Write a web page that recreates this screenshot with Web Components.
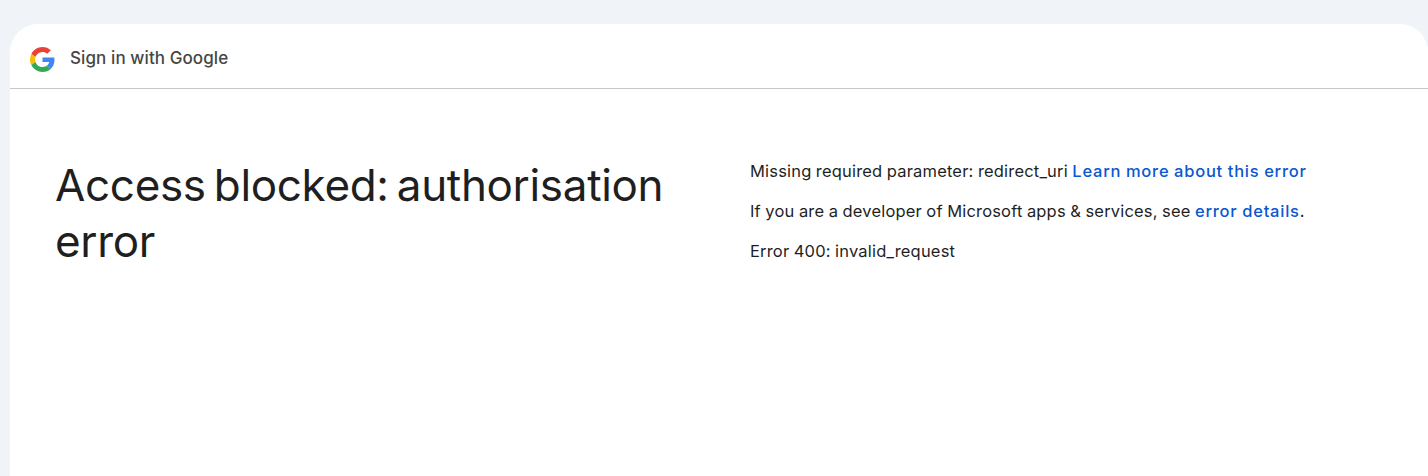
<!DOCTYPE html>
<html lang="en">
<head>
<meta charset="utf-8">
<title>Sign in with Google</title>
<style>
html, body { margin: 0; height: 100%; overflow: hidden; }
body { background: #f0f4f9; font-family: Inter, Roboto, "Liberation Sans", sans-serif; }
</style>
</head>
<body>
<signin-page>
	<signin-header>Sign in with Google</signin-header>
	<error-layout>
		<error-title slot="title">Access blocked: authorisation error</error-title>
		<error-line><span>Missing required parameter: redirect_uri</span> <error-link>Learn more about this error</error-link></error-line>
		<error-line><span>If you are a developer of Microsoft apps &amp; services, see</span> <error-link>error details</error-link>.</error-line>
		<error-line>Error 400: invalid_request</error-line>
	</error-layout>
</signin-page>
<script>
class SigninPage extends HTMLElement {
	constructor() {
		super();
		this.attachShadow({ mode: 'open' }).innerHTML = `
<style>
:host { display: block; height: 476px; box-sizing: border-box; padding: 24px 0 0 10px; }
.card { background: #fff; height: 100%; border-radius: 28px 28px 0 0; }
</style>
<div class="card"><slot></slot></div>`;
	}
}

class SigninHeader extends HTMLElement {
	constructor() {
		super();
		this.attachShadow({ mode: 'open' }).innerHTML = `
<style>
:host {
	display: flex;
	align-items: center;
	gap: 15px;
	box-sizing: border-box;
	height: 65px;
	padding: 4px 0 0 20px;
	border-bottom: 1px solid #c4c7c5;
	font: 500 17px Inter, Roboto, sans-serif;
	letter-spacing: 0.09px;
	color: #444746;
}
svg { width: 25px; height: 25px; flex: none; margin-top: 3px; }
span { margin-top: -1px; }
</style>
<svg viewBox="0 0 48 48">
	<path fill="#EA4335" d="M24 9.5c3.54 0 6.71 1.22 9.21 3.6l6.85-6.85C35.9 2.38 30.47 0 24 0 14.62 0 6.51 5.38 2.56 13.22l7.98 6.19C12.43 13.72 17.74 9.5 24 9.5z"/>
	<path fill="#4285F4" d="M46.98 24.55c0-1.57-.15-3.09-.38-4.55H24v9.02h12.94c-.58 2.96-2.26 5.48-4.78 7.18l7.73 6c4.51-4.18 7.09-10.36 7.09-17.65z"/>
	<path fill="#FBBC05" d="M10.53 28.59c-.48-1.45-.76-2.99-.76-4.59s.27-3.14.76-4.59l-7.98-6.19C.92 16.46 0 20.12 0 24c0 3.88.92 7.54 2.56 10.78l7.97-6.19z"/>
	<path fill="#34A853" d="M24 48c6.48 0 11.93-2.13 15.89-5.81l-7.73-6c-2.15 1.45-4.92 2.3-8.16 2.3-6.26 0-11.57-4.22-13.47-9.91l-7.98 6.19C6.51 42.62 14.62 48 24 48z"/>
</svg>
<span><slot></slot></span>`;
	}
}

class ErrorLayout extends HTMLElement {
	constructor() {
		super();
		this.attachShadow({ mode: 'open' }).innerHTML = `
<style>
:host { display: grid; grid-template-columns: 695px 1fr; padding: 68px 0 0 45px; }
.lines { padding-top: 2px; display: flex; flex-direction: column; gap: 16px; }
</style>
<slot name="title"></slot>
<div class="lines"><slot></slot></div>`;
	}
}

class ErrorTitle extends HTMLElement {
	constructor() {
		super();
		this.attachShadow({ mode: 'open' }).innerHTML = `
<style>
:host {
	display: block;
	width: 640px;
	font: 400 44px/56px Inter, Roboto, sans-serif;
	letter-spacing: -0.33px;
	word-spacing: -4px;
	color: #1f1f1f;
}
</style>
<slot></slot>`;
	}
}

class ErrorLine extends HTMLElement {
	constructor() {
		super();
		this.attachShadow({ mode: 'open' }).innerHTML = `
<style>
:host {
	display: block;
	font: 400 16.5px/24px Inter, Roboto, sans-serif;
	letter-spacing: 0.18px;
	word-spacing: -0.4px;
	color: #1f1f1f;
}
</style>
<slot></slot>`;
	}
}

class ErrorLink extends HTMLElement {
	constructor() {
		super();
		this.attachShadow({ mode: 'open' }).innerHTML = `
<style>
:host { display: inline; font-weight: 500; letter-spacing: 0.76px; color: #0b57d0; cursor: pointer; }
</style>
<slot></slot>`;
	}
}

customElements.define('signin-page', SigninPage);
customElements.define('signin-header', SigninHeader);
customElements.define('error-layout', ErrorLayout);
customElements.define('error-title', ErrorTitle);
customElements.define('error-line', ErrorLine);
customElements.define('error-link', ErrorLink);
</script>
</body>
</html>
